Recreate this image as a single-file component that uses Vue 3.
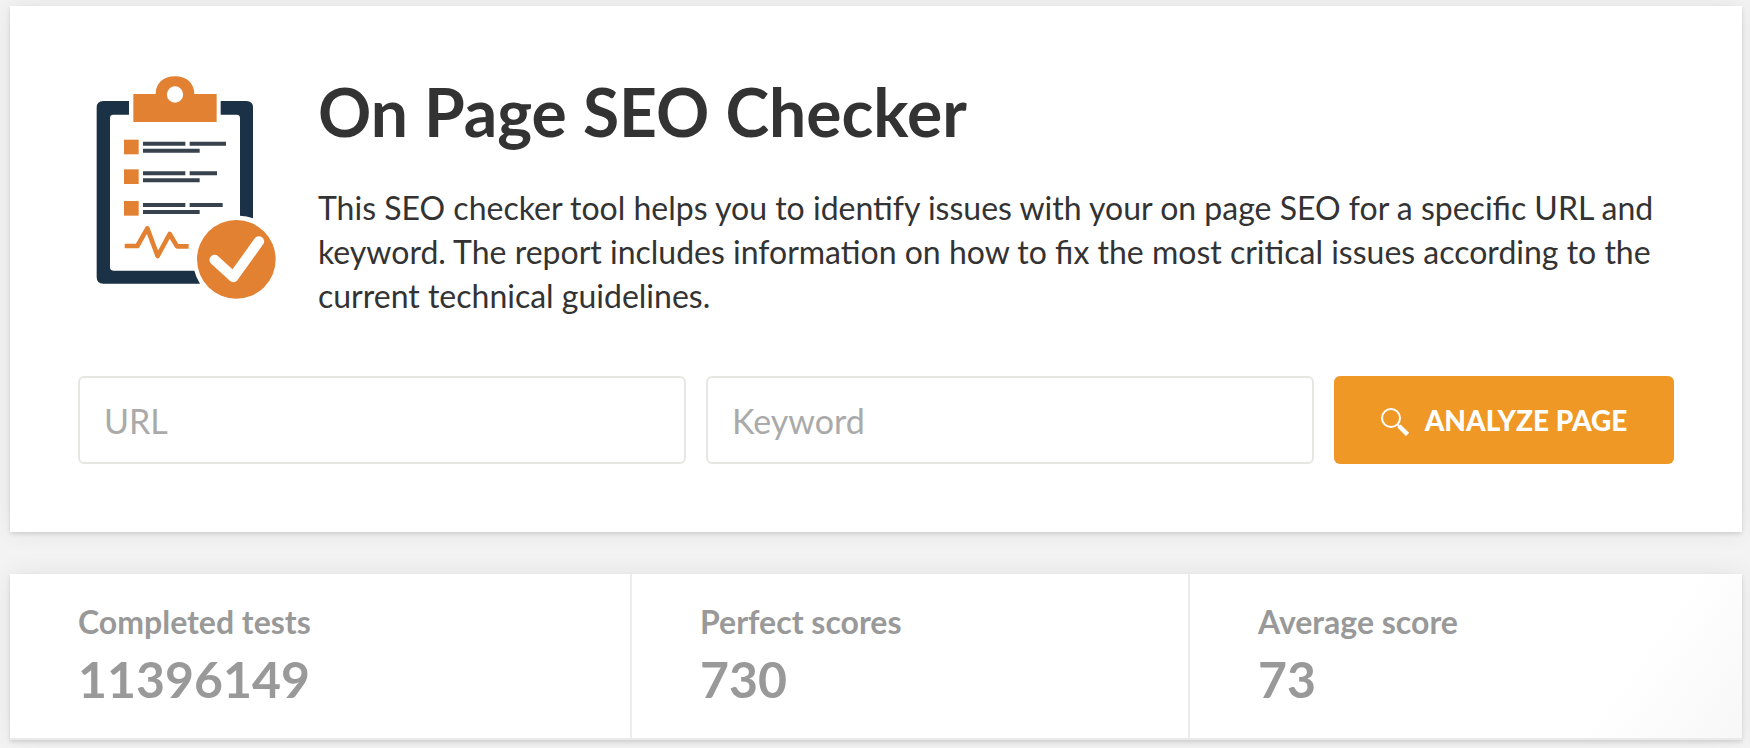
<script setup>
import { ref } from 'vue'

const url = ref('')
const keyword = ref('')

const rows = [
  { y: 239, end: 438 },
  { y: 328, end: 411 },
  { y: 423, end: 428 },
]

const stats = [
  { id: 'completed', label: 'Completed tests', value: '11396149' },
  { id: 'perfect', label: 'Perfect scores', value: '730' },
  { id: 'average', label: 'Average score', value: '73' },
]
</script>

<template>
  <main class="page">
    <section class="card checker">
      <header class="intro">
        <svg class="clipboard" viewBox="48 48 540 669" aria-hidden="true">
          <path
            fill="#1b3145"
            fill-rule="evenodd"
            d="M70 123H147V164H100Q90 164 90 174V622Q90 632 100 632H343Q348 652 360 671H70Q50 671 50 651V143Q50 123 70 123ZM422 123H499Q519 123 519 143V475Q500 468 480 467V174Q480 164 470 164H422Z"
          />
          <path
            fill="#e38133"
            fill-rule="evenodd"
            d="M160 102H227C227 70 250 49 285 49S343 70 343 102H410V186H160ZM285 79A24.500 24.500 0 1 0 285 128A24.500 24.500 0 1 0 285 79Z"
          />
          <g v-for="row in rows" :key="row.y">
            <rect x="132" :y="row.y" width="44" height="44" fill="#e38133" />
            <path
              :d="`M189 ${row.y + 12}H316M329 ${row.y + 12}H${row.end}M189 ${row.y + 33}H359`"
              stroke="#37424d"
              stroke-width="12"
            />
          </g>
          <path
            d="M134 558H172L202 505L233 588L269 522L291 559H326"
            fill="none"
            stroke="#e38133"
            stroke-width="14"
            stroke-linejoin="round"
          />
          <circle cx="469" cy="598" r="118" fill="#e38133" />
          <path
            d="M404 600L460 651L537 544"
            fill="none"
            stroke="#fff"
            stroke-width="31"
            stroke-linecap="round"
            stroke-linejoin="round"
          />
        </svg>
        <div class="copy">
          <h1>On Page SEO Checker</h1>
          <p>
            This SEO checker tool helps you to identify issues with your on page SEO for a specific
            URL and keyword. The report includes information on how to fix the most critical issues
            according to the current technical guidelines.
          </p>
        </div>
      </header>
      <form class="form" @submit.prevent>
        <input v-model="url" type="text" name="url" placeholder="URL" aria-label="URL" />
        <input v-model="keyword" type="text" name="keyword" placeholder="Keyword" aria-label="Keyword" />
        <button type="submit">
          <svg class="search" viewBox="0 -4 28 32" aria-hidden="true">
            <circle cx="10" cy="10" r="9" fill="none" stroke="#fff" stroke-width="2" />
            <path d="M16 16L19 19" stroke="#fff" stroke-width="2" />
            <path d="M18 18L26.500 26.500" stroke="#fff" stroke-width="4.500" />
          </svg>
          <span>ANALYZE PAGE</span>
        </button>
      </form>
    </section>

    <section class="card stats">
      <dl v-for="stat in stats" :key="stat.id" :class="['stat', stat.id]">
        <dt>{{ stat.label }}</dt>
        <dd>{{ stat.value }}</dd>
      </dl>
    </section>
  </main>
</template>

<style>
body {
  margin: 0;
  background: #f3f3f3;
}
</style>

<style scoped>
.page {
  box-sizing: border-box;
  display: flex;
  flex-direction: column;
  gap: 42px;
  padding: 6px 8px 8px 10px;
  font-family: Lato, "Liberation Sans", sans-serif;
  color: #333;
}

.card {
  background: #fff;
  box-shadow: 0 2px 4px rgba(0, 0, 0, 0.12), 0 0 24px rgba(0, 0, 0, 0.07);
}

.checker {
  padding: 68px;
}

.intro {
  display: flex;
  align-items: flex-start;
  gap: 42px;
  padding-left: 18px;
}

.clipboard {
  flex: none;
  width: 180px;
  margin-top: 2px;
}

.copy {
  flex: 1;
}

h1 {
  margin: 0 0 36px;
  font-size: 66px;
  line-height: 76px;
  font-weight: 700;
}

p {
  margin: 0;
  font-size: 32px;
  line-height: 44px;
}

.form {
  display: flex;
  gap: 20px;
  margin-top: 58px;
}

input {
  box-sizing: border-box;
  flex: 1;
  min-width: 0;
  height: 88px;
  padding: 0 24px;
  border: 2px solid #e6e6e3;
  border-radius: 6px;
  background: #fff;
  font: inherit;
  font-size: 34px;
  color: #333;
}

input::placeholder {
  color: #aaa;
  opacity: 1;
}

button {
  display: flex;
  align-items: center;
  justify-content: center;
  gap: 16px;
  flex: none;
  width: 340px;
  height: 88px;
  padding: 0;
  border: 0;
  border-radius: 6px;
  background: #ef9826;
  font: inherit;
  font-size: 28px;
  font-weight: 900;
  color: #fff;
}

.search {
  width: 28px;
  height: 32px;
}

.stats {
  display: grid;
  grid-template-columns: 622fr 558fr 552fr;
  border-bottom: 2px solid #eaeaea;
}

.stat {
  margin: 0;
  padding: 26px 68px 24px;
  border-right: 2px solid #ececec;
  font-weight: 700;
  color: #999;
}

.average {
  border-right: 0;
  background: linear-gradient(126deg, #fff 76%, #f7f7f7);
}

dt {
  font-size: 32px;
  line-height: 44px;
}

dd {
  margin: 0;
  font-size: 50px;
  line-height: 70px;
}
</style>
